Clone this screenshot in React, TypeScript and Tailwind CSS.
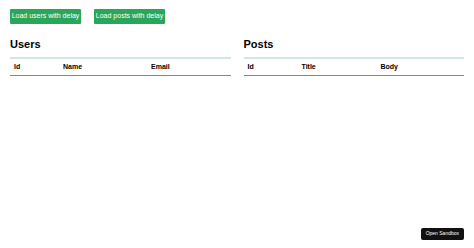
import React from 'react'

const Table = ({ title, cols }: { title: string; cols: { label: string; w: string }[] }) => (
  <div className="flex-1">
    <h2 className="text-[11px] font-bold text-black leading-none mt-[15px] mb-[7px]">{title}</h2>
    <table className="w-full border-collapse table-fixed">
      <thead>
        <tr className="border-t-2 border-t-[#d3e6de] border-b border-b-[#5e9a84]">
          {cols.map((c) => (
            <th
              key={c.label}
              className={`${c.w} text-left text-[7px] font-bold text-black px-[4px] h-[17px] leading-none`}
            >
              {c.label}
            </th>
          ))}
        </tr>
      </thead>
    </table>
  </div>
)

export default function App() {
  return (
    <div className="relative w-[474px] h-[248px] bg-white font-['Liberation_Sans',Arial,sans-serif] px-[10px] pt-[9px]">
      <div className="flex gap-[13px]">
        <button className="bg-[#2aa65a] text-white text-[7px] h-[15px] w-[71px] whitespace-nowrap rounded-[1px]">
          Load users with delay
        </button>
        <button className="bg-[#2aa65a] text-white text-[7px] h-[15px] w-[71px] whitespace-nowrap rounded-[1px]">
          Load posts with delay
        </button>
      </div>
      <div className="flex gap-[13px]">
        <Table
          title="Users"
          cols={[
            { label: 'Id', w: 'w-[49px]' },
            { label: 'Name', w: 'w-[88px]' },
            { label: 'Email', w: 'w-auto' },
          ]}
        />
        <Table
          title="Posts"
          cols={[
            { label: 'Id', w: 'w-[54px]' },
            { label: 'Title', w: 'w-[79px]' },
            { label: 'Body', w: 'w-auto' },
          ]}
        />
      </div>
      <button className="absolute right-[10px] bottom-[8px] bg-[#111] text-white text-[5px] px-[5px] h-[12px] whitespace-nowrap rounded-[2px]">
        Open Sandbox
      </button>
    </div>
  )
}
